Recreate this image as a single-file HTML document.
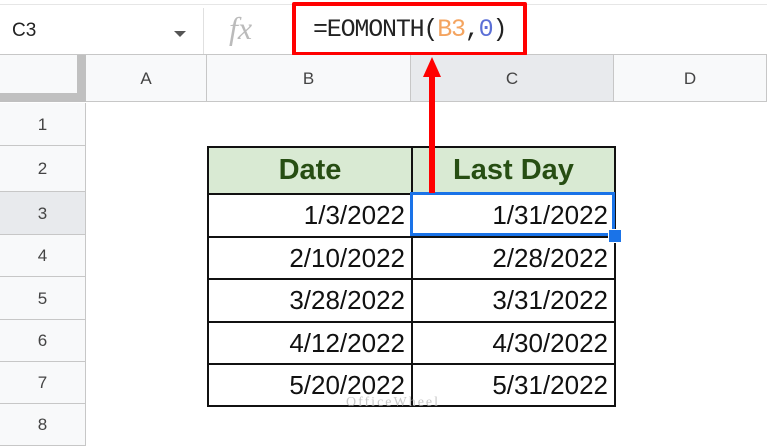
<html><head><style>
body{margin:0;width:767px;height:442px;overflow:hidden;background:#fff;font-family:"Liberation Sans",Arial,sans-serif;position:relative}
.a{position:absolute}
.ch{position:absolute;top:55px;height:47px;background:#f8f9fa;border-right:1px solid #c7c7c7;border-bottom:1px solid #c7c7c7;box-sizing:border-box;text-align:center;line-height:47px;font-size:17px;color:#444}
.rh{position:absolute;left:0;width:86px;background:#f8f9fa;border-right:1px solid #c7c7c7;border-bottom:1px solid #c7c7c7;box-sizing:border-box;text-align:center;font-size:17px;color:#444}
table{position:absolute;left:207px;top:146px;border-collapse:collapse}
td{border:2px solid #111;width:200px;padding:0 6px 0 0;text-align:right;font-size:26px;color:#111;height:41px;box-sizing:border-box}
th{border:2px solid #111;background:#d9ead3;color:#274e13;font-size:29px;height:47px;box-sizing:border-box;text-align:center}
</style></head><body>
<div class="a" style="left:0;top:4px;width:767px;height:1px;background:#e6e6e6"></div>
<div class="a" style="left:0;top:54px;width:767px;height:1px;background:#c7c7c7"></div>
<div class="a" style="left:12px;top:20px;font-size:19px;color:#222">C3</div>
<div class="a" style="left:174px;top:31px;width:0;height:0;border-left:6px solid transparent;border-right:6px solid transparent;border-top:6px solid #555"></div>
<div class="a" style="left:203px;top:8px;width:1px;height:46px;background:#e0e0e0"></div>
<div class="a" style="left:229px;top:10px;font-family:'Liberation Serif',serif;font-style:italic;font-size:32px;color:#bbb">fx</div>
<div class="a" style="left:292px;top:2px;width:235px;height:54px;border:4px solid #f00;box-sizing:border-box;border-radius:2px"></div>
<div class="a" style="left:313px;top:15px;font-family:'Liberation Mono',monospace;font-size:25px;color:#222;letter-spacing:-1.2px">=EOMONTH(<span style="color:#f4a460">B3</span>,<span style="color:#5b6fd6">0</span>)</div>
<div class="ch" style="left:0;width:86px;border-right:9px solid #c0c0c0;border-bottom:9px solid #c0c0c0"></div>
<div class="ch" style="left:86px;width:121px">A</div>
<div class="ch" style="left:207px;width:204px">B</div>
<div class="ch" style="left:411px;width:203px;background:#e8eaed">C</div>
<div class="ch" style="left:614px;width:153px">D</div>
<div class="rh" style="top:103px;height:43px;line-height:43px">1</div>
<div class="rh" style="top:146px;height:46px;line-height:46px">2</div>
<div class="rh" style="top:192px;height:43px;line-height:43px;background:#e8eaed">3</div>
<div class="rh" style="top:235px;height:42px;line-height:42px">4</div>
<div class="rh" style="top:277px;height:43px;line-height:43px">5</div>
<div class="rh" style="top:320px;height:42px;line-height:42px">6</div>
<div class="rh" style="top:362px;height:42px;line-height:42px">7</div>
<div class="rh" style="top:404px;height:42px;line-height:42px">8</div>
<table>
<tr><th style="width:204px">Date</th><th style="width:203px">Last Day</th></tr>
<tr><td style="height:43px">1/3/2022</td><td style="height:43px">1/31/2022</td></tr>
<tr><td style="height:42px">2/10/2022</td><td style="height:42px">2/28/2022</td></tr>
<tr><td style="height:43px">3/28/2022</td><td style="height:43px">3/31/2022</td></tr>
<tr><td style="height:42px">4/12/2022</td><td style="height:42px">4/30/2022</td></tr>
<tr><td style="height:42px">5/20/2022</td><td style="height:42px">5/31/2022</td></tr>
</table>
<div class="a" style="left:410px;top:192px;width:205px;height:44px;border:3px solid #1a73e8;box-sizing:border-box"></div>
<div class="a" style="left:608px;top:229px;width:12px;height:12px;background:#1a73e8;border:1px solid #fff"></div>
<div class="a" style="left:429px;top:74px;width:6px;height:119px;background:#f00"></div>
<div class="a" style="left:423px;top:57px;width:0;height:0;border-left:9px solid transparent;border-right:9px solid transparent;border-bottom:20px solid #f00"></div>
<div class="a" style="left:346px;top:395px;font-family:'Liberation Serif',serif;font-size:14px;color:#bbb;letter-spacing:2px;opacity:.8">OfficeWheel</div>
</body></html>
